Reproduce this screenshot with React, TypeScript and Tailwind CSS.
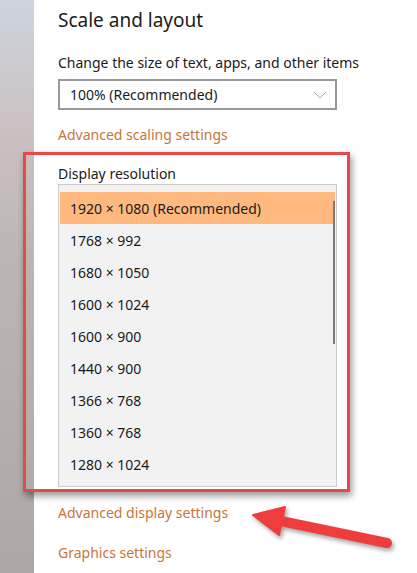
const resolutions = [
  "1920 × 1080 (Recommended)",
  "1768 × 992",
  "1680 × 1050",
  "1600 × 1024",
  "1600 × 900",
  "1440 × 900",
  "1366 × 768",
  "1360 × 768",
  "1280 × 1024",
];

function Chevron() {
  return (
    <svg width="14" height="8" viewBox="0 0 14 8" className="text-[#a8a8a8]">
      <path d="M1 1l6 6 6-6" fill="none" stroke="currentColor" strokeWidth="1" />
    </svg>
  );
}

function Arrow() {
  return (
    <svg
      width="417"
      height="573"
      viewBox="0 0 417 573"
      className="pointer-events-none absolute left-0 top-0 drop-shadow-[2px_3px_2px_rgba(0,0,0,0.35)]"
    >
      <line x1="276" y1="520" x2="387" y2="543" stroke="#ef3d3d" strokeWidth="10" strokeLinecap="round" />
      <polygon points="253,515 285,507 279,535" fill="#ef3d3d" stroke="#ef3d3d" strokeWidth="2" strokeLinejoin="round" />
    </svg>
  );
}

export default function App() {
  return (
    <div className="relative flex h-[573px] w-[417px] overflow-hidden bg-white font-['Noto_Sans',sans-serif] text-[#1b1b1b]">
      <div className="w-[34px] shrink-0 bg-[linear-gradient(180deg,#cdd4dd_0%,#cbc1c3_22%,#bdb5b4_45%,#aca7a5_100%)]" />

      <div className="flex flex-col pl-[24px] pt-[6px]">
        <h1 className="text-[19px] leading-[28px]">Scale and layout</h1>

        <p className="mt-[19px] text-[14px] leading-[20px]">
          Change the size of text, apps, and other items
        </p>

        <div className="mt-[6px] flex h-[31px] w-[279px] items-center justify-between border-2 border-[#999999] pl-[10px] pr-[8px] text-[14px]">
          <span>100% (Recommended)</span>
          <Chevron />
        </div>

        <a className="mt-[15px] text-[14px] leading-[20px] text-[#c4773a]">Advanced scaling settings</a>

        <p className="mt-[19px] text-[14px] leading-[20px]">Display resolution</p>

        <div className="relative w-[279px] border border-[#cccccc] bg-[#f2f2f2] px-[1px] pb-[6px] pt-[7px]">
          {resolutions.map((r, i) => (
            <div
              key={r}
              className={`flex h-[32px] items-center pl-[10px] text-[14px] ${i === 0 ? "bg-[#ffb97e]" : ""}`}
            >
              {r}
            </div>
          ))}
          <div className="absolute right-[1px] top-[16px] h-[143px] w-[2px] bg-[#7a7a7a]" />
        </div>

        <a className="mt-[16px] text-[14px] leading-[20px] text-[#c4773a]">Advanced display settings</a>
        <a className="mt-[20px] text-[14px] leading-[20px] text-[#c4773a]">Graphics settings</a>
      </div>

      <div className="pointer-events-none absolute left-[23px] top-[152px] h-[340px] w-[327px] border-[3px] border-[#e84848] shadow-[2px_4px_7px_rgba(0,0,0,0.4)]" />
      <Arrow />
    </div>
  );
}
